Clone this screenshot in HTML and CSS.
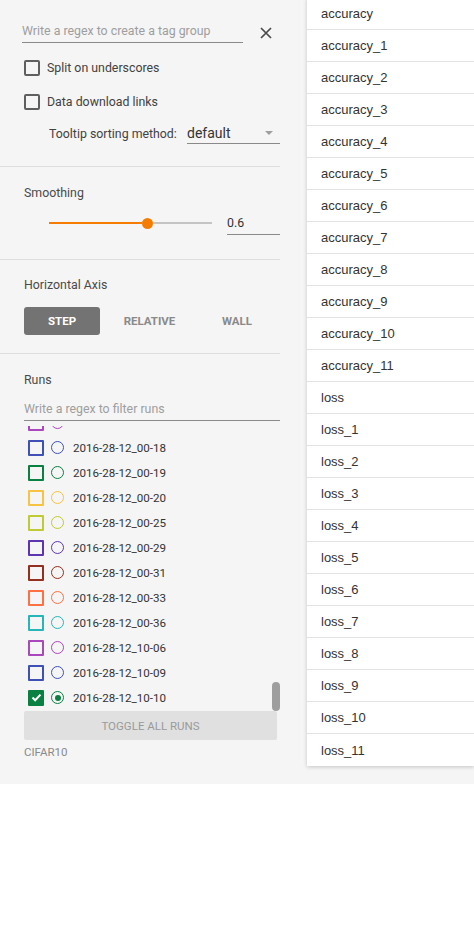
FILE: index.html
```html
<!DOCTYPE html>
<html>
<head>
<meta charset="utf-8">
<link rel="stylesheet" href="styles.css">
</head>
<body>
<div class="page">
  <aside class="sidebar">
    <section class="sec sec-tags">
      <div class="tag-row">
        <div class="text-input tag-input">Write a regex to create a tag group</div>
        <svg class="close" width="12" height="12" viewBox="0 0 12 12"><path d="M1 1 L11 11 M11 1 L1 11" stroke="#4a4a4a" stroke-width="1.7" fill="none"/></svg>
      </div>
      <div class="check-row first"><span class="box"></span><span>Split on underscores</span></div>
      <div class="check-row second"><span class="box"></span><span>Data download links</span></div>
      <div class="tooltip-row">
        <span class="tooltip-label">Tooltip sorting method:</span>
        <div class="select"><span>default</span><svg class="arrow" width="8" height="4" viewBox="0 0 8 4"><polygon points="0,0 8,0 4,4" fill="#9e9e9e"/></svg></div>
      </div>
    </section>
    <section class="sec sec-smooth">
      <div class="label smooth-label">Smoothing</div>
      <div class="slider-row">
        <div class="slider">
          <div class="track-fill"></div>
          <div class="knob"></div>
          <div class="track-rest"></div>
        </div>
        <div class="value">0.6</div>
      </div>
    </section>
    <section class="sec sec-axis">
      <div class="label axis-label">Horizontal Axis</div>
      <div class="axis-buttons">
        <div class="axis-btn active">STEP</div>
        <div class="axis-btn">RELATIVE</div>
        <div class="axis-btn">WALL</div>
      </div>
    </section>
    <section class="sec-runs">
      <div class="label runs-label">Runs</div>
      <div class="text-input runs-filter">Write a regex to filter runs</div>
      <div class="runs-box">
        <div class="runs-inner">
          <div class="run c-purple"><span class="sq"></span><span class="rd"></span></div>
          <div class="run c-blue"><span class="sq"></span><span class="rd"></span><span class="name">2016-28-12_00-18</span></div>
          <div class="run c-green"><span class="sq"></span><span class="rd"></span><span class="name">2016-28-12_00-19</span></div>
          <div class="run c-yellow"><span class="sq"></span><span class="rd"></span><span class="name">2016-28-12_00-20</span></div>
          <div class="run c-lime"><span class="sq"></span><span class="rd"></span><span class="name">2016-28-12_00-25</span></div>
          <div class="run c-deep"><span class="sq"></span><span class="rd"></span><span class="name">2016-28-12_00-29</span></div>
          <div class="run c-red"><span class="sq"></span><span class="rd"></span><span class="name">2016-28-12_00-31</span></div>
          <div class="run c-orange"><span class="sq"></span><span class="rd"></span><span class="name">2016-28-12_00-33</span></div>
          <div class="run c-teal"><span class="sq"></span><span class="rd"></span><span class="name">2016-28-12_00-36</span></div>
          <div class="run c-purple"><span class="sq"></span><span class="rd"></span><span class="name">2016-28-12_10-06</span></div>
          <div class="run c-blue"><span class="sq"></span><span class="rd"></span><span class="name">2016-28-12_10-09</span></div>
          <div class="run c-green checked"><span class="sq"><svg width="11" height="11" viewBox="0 0 11 11"><path d="M1.5 5.5 L4.2 8.2 L9.5 2.6" stroke="#fff" stroke-width="2" fill="none"/></svg></span><span class="rd"><span class="dot"></span></span><span class="name">2016-28-12_10-10</span></div>
        </div>
        <div class="thumb"></div>
      </div>
      <div class="toggle">TOGGLE ALL RUNS</div>
      <div class="dataset">CIFAR10</div>
    </section>
  </aside>
  <ul class="tags">
    <li>accuracy</li>
    <li>accuracy_1</li>
    <li>accuracy_2</li>
    <li>accuracy_3</li>
    <li>accuracy_4</li>
    <li>accuracy_5</li>
    <li>accuracy_6</li>
    <li>accuracy_7</li>
    <li>accuracy_8</li>
    <li>accuracy_9</li>
    <li>accuracy_10</li>
    <li>accuracy_11</li>
    <li>loss</li>
    <li>loss_1</li>
    <li>loss_2</li>
    <li>loss_3</li>
    <li>loss_4</li>
    <li>loss_5</li>
    <li>loss_6</li>
    <li>loss_7</li>
    <li>loss_8</li>
    <li>loss_9</li>
    <li>loss_10</li>
    <li>loss_11</li>
  </ul>
</div>
</body>
</html>
```
FILE: styles.css
```css
* { box-sizing: border-box; }
html, body { margin: 0; padding: 0; background: #fff; }
body { font-family: Roboto, "Noto Sans", sans-serif; color: #424242; }

.page {
  display: flex;
  align-items: flex-start;
  background: #f5f5f5;
  height: 784px;
  overflow: hidden;
}

.sidebar { width: 280px; flex: none; }

.sec { border-bottom: 1px solid #dedede; }
.sec-tags { height: 167px; padding-top: 19px; }
.sec-smooth { height: 93px; padding-top: 18px; }
.sec-axis { height: 94px; padding-top: 17px; }
.sec-runs { padding-top: 18px; padding-left: 24px; }

.text-input {
  font-size: 12.35px;
  color: #9e9e9e;
  border-bottom: 1px solid #8a8a8a;
  display: flex;
  align-items: center;
}

.tag-row { display: flex; align-items: center; }
.tag-input { margin-left: 22px; width: 221px; height: 24px; }
.close { margin-left: 17px; margin-top: 3px; }

.check-row {
  display: flex;
  align-items: center;
  height: 24px;
  padding-left: 24px;
  font-size: 12.35px;
  color: #424242;
}
.check-row.first { margin-top: 13px; }
.check-row.second { margin-top: 10px; }
.box {
  width: 16px; height: 16px;
  border: 2px solid #5f5f5f;
  border-radius: 2px;
  margin-right: 7px;
  flex: none;
}

.tooltip-row {
  display: flex;
  align-items: flex-start;
  height: 24px;
  margin-top: 8px;
  padding-left: 49px;
  font-size: 12.35px;
  color: #424242;
}
.tooltip-label { line-height: 24px; }
.select {
  margin-left: auto;
  width: 93px;
  height: 22px;
  border-bottom: 1px solid #8a8a8a;
  display: flex;
  align-items: center;
  font-size: 14px;
  color: #333;
}
.select .arrow { margin-left: auto; margin-right: 7px; }

.label {
  font-size: 12.35px;
  line-height: 16px;
  color: #4a4a4a;
  padding-left: 24px;
}
.sec-runs .label { padding-left: 0; }

.slider-row {
  display: flex;
  align-items: flex-start;
  margin-top: 10px;
  padding-left: 49px;
  height: 24px;
}
.slider {
  width: 163px;
  height: 24px;
  display: flex;
  align-items: center;
}
.track-fill { width: 93px; height: 2px; background: #f57c00; }
.knob {
  width: 11px; height: 11px;
  border-radius: 50%;
  background: #f57c00;
  flex: none;
}
.track-rest { flex: 1; height: 2px; background: #c4c4c4; }
.value {
  margin-left: 15px;
  width: 53px;
  height: 24px;
  border-bottom: 1px solid #8a8a8a;
  font-size: 12.35px;
  color: #333;
  display: flex;
  align-items: center;
}

.axis-buttons {
  display: flex;
  gap: 11.5px;
  margin-top: 14px;
  padding-left: 24px;
}
.axis-btn {
  width: 76px;
  height: 28px;
  border-radius: 3px;
  display: flex;
  align-items: center;
  justify-content: center;
  font-size: 11.5px;
  font-weight: bold;
  color: #8a8a8a;
}
.axis-btn.active { background: #737373; color: #fff; }

.runs-filter { margin-top: 9px; height: 24px; width: 256px; }

.runs-box {
  position: relative;
  width: 256px;
  height: 285px;
  margin-top: 5px;
  overflow: hidden;
}
.runs-inner { margin-top: -16px; }
.run {
  display: flex;
  align-items: center;
  height: 25px;
  padding-left: 4px;
  font-size: 11.6px;
  color: #333;
}
.sq {
  width: 16px; height: 16px;
  border: 2px solid currentColor;
  border-radius: 1px;
  flex: none;
  display: flex;
  align-items: center;
  justify-content: center;
}
.rd {
  width: 13px; height: 13px;
  border: 1.5px solid currentColor;
  border-radius: 50%;
  margin-left: 7px;
  flex: none;
  display: flex;
  align-items: center;
  justify-content: center;
}
.dot { width: 6px; height: 6px; border-radius: 50%; background: currentColor; }
.name { margin-left: 9px; color: #333; }
.checked .sq { background: currentColor; }

.c-purple { color: #ab47bc; }
.c-blue { color: #3f51b5; }
.c-green { color: #0b8043; }
.c-yellow { color: #f6c343; }
.c-lime { color: #c0ca33; }
.c-deep { color: #5e35b1; }
.c-red { color: #93301f; }
.c-orange { color: #ff7043; }
.c-teal { color: #26b5b8; }

.thumb {
  position: absolute;
  right: 0;
  top: 256px;
  width: 8px;
  height: 29px;
  border-radius: 4px;
  background: #9e9e9e;
}

.toggle {
  width: 253px;
  height: 29px;
  background: #e0e0e0;
  border-radius: 2px;
  display: flex;
  align-items: center;
  justify-content: center;
  font-size: 11.5px;
  color: #9a9a9a;
}
.dataset {
  margin-top: 4px;
  font-size: 11.5px;
  line-height: 16px;
  color: #8a8a8a;
}

.tags {
  list-style: none;
  margin: -2px 0 0 27px;
  padding: 0;
  flex: 1;
  background: #fff;
  box-shadow: 0 1px 4px rgba(0, 0, 0, 0.2);
  font-family: "Liberation Sans", Arial, sans-serif;
  font-size: 13px;
  color: #333;
}
.tags li {
  height: 32px;
  border-bottom: 1px solid #e3e3e3;
  padding-left: 14px;
  display: flex;
  align-items: center;
}
.tags li:last-child { border-bottom: none; }
```
